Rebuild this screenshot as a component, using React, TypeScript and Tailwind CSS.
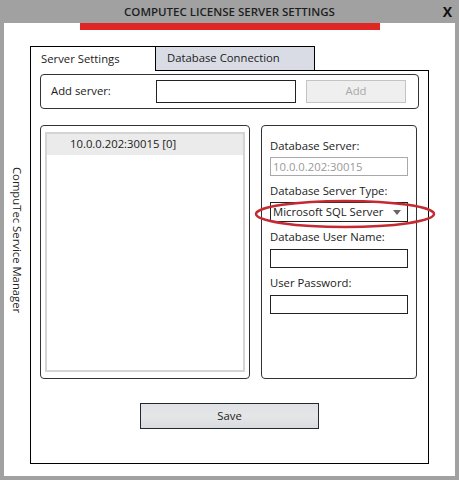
import React from "react";

const font = { fontFamily: '"Segoe UI", "Open Sans", "Noto Sans", sans-serif' };

function Field({ label, value, disabled }: { label: string; value?: string; disabled?: boolean }) {
    return (
        <div className="flex flex-col">
            <span className="text-[11.3px] leading-[16px] text-[#1b1b1b]">{label}</span>
            <div
                className={
                    disabled
                        ? "mt-[3px] h-[19px] border border-[#a9a9a9] px-[2px] text-[11.3px] leading-[17px] text-[#9a9a9a]"
                        : "mt-[4px] h-[19px] border border-[#222] bg-white"
                }
            >
                {value}
            </div>
        </div>
    );
}

export default function App() {
    return (
        <div className="flex h-[480px] w-[459px] flex-col bg-[#a1a1a1] text-[#1b1b1b]" style={font}>
            {/* Title bar */}
            <div className="relative flex h-[23px] shrink-0 items-center justify-center">
                <span className="text-[11.5px] font-semibold text-[#1e1e1e]">
                    COMPUTEC LICENSE SERVER SETTINGS
                </span>
                <span className="absolute right-[7px] top-[4px] text-[14px] font-bold leading-[16px] text-[#111]">X</span>
            </div>

            {/* Window body */}
            <div className="mx-[4px] mb-[4px] flex flex-1 flex-col bg-white">
                <div className="mx-auto h-[7px] w-[300px] bg-[#e02525]" />

                <div className="flex flex-1">
                    {/* Side caption */}
                    <div className="flex w-[26px] items-center justify-center pb-[25px]">
                        <span className="text-[11.3px] leading-[14px] text-[#222]" style={{ writingMode: "vertical-rl" }}>
                            CompuTec Service Manager
                        </span>
                    </div>

                    <div className="mb-[12px] mt-[16px] flex w-[399px] flex-col">
                        {/* Tabs */}
                        <div className="flex items-end text-[11.3px]">
                            <div className="relative z-10 -mb-px flex h-[25px] w-[126px] items-center border-x border-t border-black bg-white pl-[10px]">
                                Server Settings
                            </div>
                            <div className="flex h-[24px] w-[159px] items-center border-r border-t border-black bg-[#d9dce5] pl-[11px]">
                                Database Connection
                            </div>
                        </div>

                        {/* Tab page */}
                        <div className="flex flex-1 flex-col border border-black px-[9px] pt-[3px] text-[11.3px]">
                            <div className="flex h-[35px] items-center rounded-[4px] border border-[#333] pl-[10px]">
                                <span className="w-[105px]">Add server:</span>
                                <div className="h-[23px] w-[140px] border border-[#222] bg-white" />
                                <div className="ml-[10px] flex h-[23px] w-[100px] items-center justify-center border border-[#c4c4c4] bg-[#efefef] text-[#a8a8a8]">
                                    Add
                                </div>
                            </div>

                            <div className="mt-[16px] flex h-[254px] gap-[11px] pr-[2px]">
                                {/* Server list */}
                                <div className="w-[210px] rounded-[4px] border border-[#333] px-[4px] py-[6px]">
                                    <div className="h-full border-2 border-[#d4d4d4] bg-white">
                                        <div className="flex h-[21px] items-center bg-[#ebebeb] pl-[23px]">
                                            10.0.0.202:30015 [0]
                                        </div>
                                    </div>
                                </div>

                                {/* Database details */}
                                <div className="relative flex flex-1 flex-col gap-[7px] rounded-[4px] border border-[#333] px-[8px] pt-[12px]">
                                    <Field label="Database Server:" value="10.0.0.202:30015" disabled />
                                    <div className="flex flex-col">
                                        <span className="leading-[16px]">Database Server Type:</span>
                                        <div className="mt-[3px] flex h-[20px] items-center justify-between border border-[#222] pl-[2px] pr-[6px]">
                                            <span>Microsoft SQL Server</span>
                                            <svg width="8" height="5" viewBox="0 0 8 5">
                                                <path d="M0 0h8L4 5z" fill="#666" />
                                            </svg>
                                        </div>
                                    </div>
                                    <Field label="Database User Name:" />
                                    <Field label="User Password:" />

                                    {/* highlight ring around the server type */}
                                    <svg
                                        className="pointer-events-none absolute left-[-8px] top-[73px]"
                                        width="182"
                                        height="30"
                                        viewBox="0 0 182 30"
                                    >
                                        <ellipse cx="91" cy="15" rx="89" ry="13" fill="none" stroke="#c42a33" strokeWidth="2.5" />
                                    </svg>
                                </div>
                            </div>

                            <div className="mt-[24px] flex justify-center">
                                <div
                                    className="flex h-[26px] w-[179px] items-center justify-center border border-[#1d2a30]"
                                    style={{ background: "linear-gradient(#dfe1e4, #e4e6e8 50%, #d9dbde)" }}
                                >
                                    Save
                                </div>
                            </div>
                        </div>
                    </div>
                </div>
            </div>
        </div>
    );
}
